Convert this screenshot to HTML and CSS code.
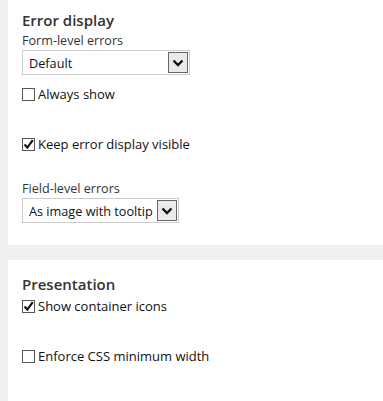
FILE: index.html
```html
<!DOCTYPE html>
<html>
<head>
<meta charset="utf-8">
<link rel="stylesheet" href="styles.css">
</head>
<body>
<div class="page">
  <section class="panel panel-errors">
    <h2 class="heading">Error display</h2>
    <div class="label">Form-level errors</div>
    <div class="select select-form">
      <span class="select-text">Default</span>
      <span class="select-btn"><svg width="12" height="8" viewBox="0 0 12 8"><path d="M1.5 1.5 L6 6 L10.5 1.5" fill="none" stroke="#111" stroke-width="2.4"/></svg></span>
    </div>
    <label class="check check-always"><span class="box"></span><span class="check-text">Always show</span></label>
    <label class="check check-keep"><span class="box"><svg width="11" height="11" viewBox="0 0 11 11"><path d="M1.5 5.5 L4.3 8.6 L9.8 1.2" fill="none" stroke="#111" stroke-width="2.2"/></svg></span><span class="check-text">Keep error display visible</span></label>
    <div class="label label-field">Field-level errors</div>
    <div class="select select-field">
      <span class="select-text">As image with tooltip</span>
      <span class="select-btn"><svg width="12" height="8" viewBox="0 0 12 8"><path d="M1.5 1.5 L6 6 L10.5 1.5" fill="none" stroke="#111" stroke-width="2.4"/></svg></span>
    </div>
  </section>
  <section class="panel panel-presentation">
    <h2 class="heading">Presentation</h2>
    <label class="check check-icons"><span class="box"><svg width="11" height="11" viewBox="0 0 11 11"><path d="M1.5 5.5 L4.3 8.6 L9.8 1.2" fill="none" stroke="#111" stroke-width="2.2"/></svg></span><span class="check-text">Show container icons</span></label>
    <label class="check check-css"><span class="box"></span><span class="check-text">Enforce CSS minimum width</span></label>
  </section>
</div>
</body>
</html>
```

FILE: styles.css
```css
html, body {
  margin: 0;
  padding: 0;
  background: #efefef;
}
body {
  font-family: "Open Sans", "Noto Sans", sans-serif;
  color: #222;
  width: 383px;
  height: 401px;
  overflow: hidden;
}
.page {
  padding-left: 8px;
  display: flex;
  flex-direction: column;
  gap: 15px;
}
.panel {
  background: #fff;
  padding: 10px 14px 0;
  display: flex;
  flex-direction: column;
  align-items: flex-start;
}
.panel-errors {
  height: 245px;
  box-sizing: border-box;
}
.panel-presentation {
  height: 141px;
  box-sizing: border-box;
  padding-top: 14px;
}
.heading {
  margin: 0;
  font-size: 15px;
  font-weight: 600;
  line-height: 21px;
  color: #333;
}
.label {
  font-size: 12.6px;
  line-height: 16px;
  margin-top: 2px;
  color: #333;
}
.label-field {
  margin-top: 28px;
}
.select {
  margin-top: 1px;
  height: 25px;
  box-sizing: border-box;
  border: 1px solid #ccc;
  display: flex;
  align-items: center;
  justify-content: space-between;
  padding: 0 1px 0 6px;
}
.select-form { width: 168px; }
.select-field { width: 157px; }
.select-text {
  font-size: 12.7px;
  line-height: 20px;
  color: #111;
  white-space: nowrap;
}
.select-btn {
  width: 20px;
  height: 21px;
  box-sizing: border-box;
  border: 1px solid #666;
  background: #eaeaea;
  display: flex;
  align-items: center;
  justify-content: center;
  flex: none;
}
.check {
  display: flex;
  align-items: center;
  gap: 3px;
  font-size: 13px;
  line-height: 18px;
  color: #111;
}
.box {
  width: 13px;
  height: 13px;
  box-sizing: border-box;
  border: 1px solid #555;
  background: #fff;
  display: flex;
  align-items: center;
  justify-content: center;
  flex: none;
}
.check-always { margin-top: 10px; }
.check-keep { margin-top: 32px; }
.check-icons { margin-top: 2px; }
.check-css { margin-top: 32px; }
```
